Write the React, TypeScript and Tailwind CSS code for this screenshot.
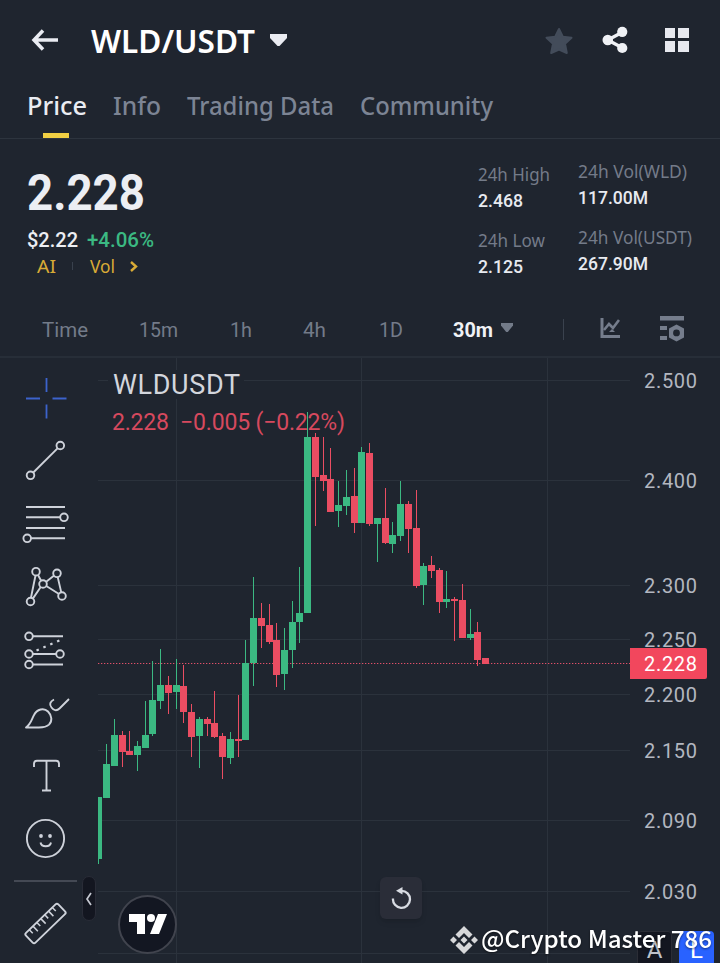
import React from "react";

type Candle = [x: number, high: number, top: number, bottom: number, low: number, up: 0 | 1];

// Candle geometry in chart pixels: centre, wick top, body top, body bottom, wick bottom, direction.
const candles: Candle[] = [
  [106.5, 744, 764, 798, 798, 1],
  [114.5, 719, 735, 766, 766, 1],
  [122.5, 731, 735, 752, 767, 0],
  [129.5, 731, 751, 755, 755, 0],
  [137.5, 741, 746, 755, 771, 1],
  [145.5, 701, 735, 748, 748, 1],
  [152.5, 661, 700, 734, 736, 1],
  [160.5, 649, 685, 701, 709, 1],
  [168.5, 676, 685, 693, 714, 0],
  [176.5, 659, 685, 692, 709, 1],
  [183.5, 665, 686, 712, 723, 0],
  [191.5, 704, 712, 737, 757, 0],
  [199.5, 717, 719, 736, 768, 1],
  [207.5, 717, 719, 724, 736, 0],
  [214.5, 691, 723, 737, 738, 0],
  [222.5, 733, 736, 757, 779, 0],
  [230.5, 732, 739, 758, 764, 1],
  [238.5, 695, 739, 741, 757, 0],
  [245.5, 640, 663, 740, 740, 1],
  [253.5, 577, 618, 663, 686, 1],
  [261.5, 603, 618, 626, 648, 0],
  [269.5, 604, 625, 642, 644, 0],
  [276.5, 623, 640, 675, 687, 0],
  [284.5, 628, 650, 674, 690, 1],
  [292.5, 601, 622, 650, 668, 1],
  [299.5, 567, 613, 622, 643, 1],
  [307.5, 412, 437, 613, 613, 1],
  [315.5, 433, 437, 477, 526, 0],
  [323.5, 437, 475, 481, 491, 0],
  [330.5, 448, 479, 512, 512, 0],
  [338.5, 481, 505, 511, 527, 1],
  [346.5, 470, 497, 506, 515, 1],
  [354.5, 468, 496, 523, 533, 0],
  [361.5, 447, 452, 523, 523, 1],
  [369.5, 443, 453, 524, 526, 0],
  [377.5, 518, 518, 524, 562, 1],
  [385.5, 488, 518, 543, 544, 0],
  [392.5, 522, 535, 544, 553, 1],
  [400.5, 481, 504, 536, 541, 1],
  [408.5, 501, 504, 529, 553, 0],
  [416.5, 490, 528, 586, 588, 0],
  [423.5, 563, 566, 585, 605, 1],
  [431.5, 556, 565, 571, 578, 0],
  [439.5, 568, 570, 602, 613, 0],
  [446.5, 571, 599, 602, 608, 1],
  [454.5, 597, 599, 601, 641, 0],
  [462.5, 584, 600, 638, 638, 0],
  [470.5, 609, 634, 638, 640, 1],
  [477.5, 622, 632, 660, 666, 0],
  [485.5, 658, 658, 664, 664, 0],
];

const levels: [number, string][] = [
  [380, "2.500"],
  [480, "2.400"],
  [585, "2.300"],
  [639, "2.250"],
  [694, "2.200"],
  [750, "2.150"],
  [820, "2.090"],
  [891, "2.030"],
  [953, ""],
];

const UP = "#3bb982";
const DOWN = "#ea4d62";

function Chart() {
  return (
    <svg className="block shrink-0" width="622" height="605" viewBox="98 358 622 605" fontFamily="Roboto, sans-serif">
      <g stroke="#2b323c" strokeWidth="1">
        {[176.5, 361.5, 547.5].map((x) => (
          <line key={x} x1={x} x2={x} y1="358" y2="963" />
        ))}
        {levels.map(([y]) => (
          <line key={y} x1="98" x2="630" y1={y + 0.5} y2={y + 0.5} />
        ))}
      </g>
      <line x1="98" x2="630" y1="663.5" y2="663.5" stroke="#e0506a" strokeWidth="1.2" strokeDasharray="1.3 1.7" />
      <text x="112" y="430" fontSize="23" fill="#d6495e" textLength="57">2.228</text>
      <text x="180" y="430" fontSize="23" fill="#d6495e" textLength="165">−0.005 (−0.22%)</text>
      <rect x="98" y="797" width="4" height="62" fill={UP} />
      <rect x="98" y="859" width="1" height="5" fill={UP} />
      {candles.map(([x, h, t, b, l, up]) => (
        <g key={x} fill={up ? UP : DOWN}>
          <rect x={x - 0.5} y={h} width="1" height={l - h} />
          <rect x={x - 3.5} y={t} width="7" height={b - t} />
        </g>
      ))}
      <rect x="108" y="370" width="136" height="29" fill="#1f252f" />
      <text x="113" y="393.5" fontSize="27" fill="#d3d6dd" textLength="127">WLDUSDT</text>
      <g fontSize="20" fill="#b3b7c0">
        {levels.map(([y, label]) => (
          <text key={y} x="644" y={y + 7.5} textLength={label ? 53 : undefined}>{label}</text>
        ))}
      </g>
      <path d="M630 648h75a2 2 0 0 1 2 2v27a2 2 0 0 1-2 2h-75z" fill="#f2475d" />
      <text x="644" y="671" fontSize="20" fill="#fff" textLength="53">2.228</text>
    </svg>
  );
}

function DrawingTools() {
  return (
    <svg className="block shrink-0" width="98" height="605" viewBox="0 358 98 605" fill="none" stroke="#ced2da" strokeWidth="1.9">
      <path d="M46.5 378v14M46.5 404.500v14M26 398.500h14M52.500 398.500h14" stroke="#3c63cc" strokeWidth="1.8" />
      <circle cx="60.300" cy="445.500" r="3.800" />
      <circle cx="30.500" cy="475.300" r="3.800" />
      <path d="m33.300 472.500 24.200-24.200" />
      <path d="M26 507h39M26 517.300h34M26 528h39M31 538.300h34" />
      <circle cx="64" cy="517.300" r="3.800" />
      <circle cx="27.200" cy="538.300" r="3.800" />
      <circle cx="36" cy="571.700" r="3.800" />
      <circle cx="57" cy="573.300" r="3.800" />
      <circle cx="43" cy="584" r="3.800" />
      <circle cx="30.500" cy="601.500" r="3.800" />
      <circle cx="62" cy="596" r="3.800" />
      <path d="m35.500 575.500-4.500 22M38 575l3 5.500M46.200 581.800l7.600-6M57.700 577.100l3.500 15M46.300 586l12.300 7.800M40.700 587l-7.700 11.400" />
      <circle cx="29" cy="636.300" r="3.800" />
      <circle cx="29" cy="654" r="3.800" />
      <circle cx="60" cy="654" r="3.800" />
      <circle cx="29" cy="664.500" r="3.800" />
      <path d="M33 636.300h30M33 654h23M33 664.500h30" />
      <path d="m36.500 650.500 25-11" strokeWidth="2.200" strokeDasharray="2.500 5" />
      <path d="M26 727.500c5-3.500 5.500-8 8-12.500 3-6 10-7.500 14-3.500 4 4 4.500 9.500 1 13.200-3 3-7 2.800-11 2.800z" strokeLinejoin="round" />
      <path d="M54 699.500c-4 2-5 5-2.500 8 2 2.800 5 4 8 1L69 699" />
      <path d="M34 767v-3c0-2 1-3.300 3-3.300h19c2 0 3 1.300 3 3.300v3M46.500 761v29M42 790.500h9" />
      <circle cx="45.500" cy="838.500" r="18.600" />
      <path d="M40.500 842.500c1 5 9.500 5 10.500 0" />
      <circle cx="41" cy="836" r="1.900" fill="#ced2da" stroke="none" />
      <circle cx="50" cy="836" r="1.900" fill="#ced2da" stroke="none" />
      <path d="M14 881h63" stroke="#444954" strokeWidth="2" />
      <g transform="translate(45.500 923.500) rotate(-44)">
        <rect x="-22.500" y="-6.800" width="45" height="13.600" rx="2" />
        <path d="M-16-6.800v5M-10.800-6.800v7M-5.500-6.800v5M0-6.800v7M5.500-6.800v5M10.800-6.800v7M16-6.800v5" strokeWidth="1.500" />
      </g>
    </svg>
  );
}

// A single line of text fitted to a fixed width.
function Fit({ children, w, size, weight = 400, font = "'Noto Sans', sans-serif" }: { children: string; w: number; size: number; weight?: number; font?: string }) {
  return (
    <svg className="block shrink-0 overflow-visible" width={w} height={size * 1.3} fill="currentColor">
      <text y={size} fontSize={size} fontWeight={weight} fontFamily={font} textLength={w} lengthAdjust="spacingAndGlyphs">{children}</text>
    </svg>
  );
}

function Stat({ label, value, w, vw }: { label: string; value: string; w: number; vw: number }) {
  return (
    <div className="h-[66px]">
      <div className="h-[26px] pt-px text-[#747b89]"><Fit w={w} size={18}>{label}</Fit></div>
      <div className="pt-[0.5px] text-[#e7eaf0]"><Fit w={vw} size={18} weight={500} font="Roboto, sans-serif">{value}</Fit></div>
    </div>
  );
}

export default function App() {
  return (
    <div className="relative flex h-[963px] w-[720px] flex-col overflow-hidden bg-[#1f252f] font-[Roboto,sans-serif]">
      <header className="flex h-20 shrink-0 items-center pl-[31px]">
        <svg className="-mt-px" width="28" height="22" viewBox="0 0 28 22" fill="none" stroke="#eaecf2" strokeWidth="3.500">
          <path d="M12 1.500 3 11l9 9.500M3 11h24" />
        </svg>
        <div className="ml-8 pt-0.5 text-white"><Fit w={164} size={31.5} weight={600}>WLD/USDT</Fit></div>
        <svg className="ml-[15px]" width="17" height="13" viewBox="0 0 17 13" fill="#eaecf2"><path d="M0 0h17v4L9.500 12h-2L0 4z" /></svg>
        <svg className="ml-[258px] mt-px" width="28" height="28" viewBox="0 0 28 28" fill="#434c5a" stroke="#434c5a" strokeWidth="2" strokeLinejoin="round"><path d="m14 2 3.800 7.800 8.700 1-6.500 6 1.800 9.200L14 22.500 6.200 26 8 16.800l-6.500-6 8.700-1z" /></svg>
        <svg className="-mt-px ml-[29px]" width="27" height="28" viewBox="0 0 28 28" fill="#eff1f5"><path d="M21 6 6 14l15 8" fill="none" stroke="#eff1f5" strokeWidth="3.500" /><circle cx="21" cy="5.500" r="5.300" /><circle cx="6" cy="14" r="5.500" /><circle cx="21" cy="22.300" r="5.300" /></svg>
        <div className="-mt-px ml-[35.5px] grid grid-cols-2 gap-[3px]">
          {[0, 1, 2, 3].map((i) => <i key={i} className="block size-[10.500px] bg-[#e7e9ef]" />)}
        </div>
      </header>

      <nav className="flex h-[59px] shrink-0 border-b border-[#2d343e] pl-[27px] pt-2.5 text-[#7c8494]">
        <div className="relative text-[#eaecf2]">
          <Fit w={60} size={24.5} weight={500}>Price</Fit>
          <i className="absolute left-4 top-[43px] h-[5px] w-[26px] bg-[#f1cf43]" />
        </div>
        <div className="ml-[26px]"><Fit w={48} size={24.5} weight={500}>Info</Fit></div>
        <div className="ml-[26px]"><Fit w={147} size={24.5} weight={500}>Trading Data</Fit></div>
        <div className="ml-[26px]"><Fit w={133} size={24.5} weight={500}>Community</Fit></div>
      </nav>

      <section className="flex h-[163px] shrink-0 pl-[27px]">
        <div className="w-[451px]">
          <div className="h-[86px] pt-[21px] text-[#eceef3]"><Fit w={118} size={50} weight={700} font="Roboto, sans-serif">2.228</Fit></div>
          <div className="flex h-[30px] gap-[9px] pt-px">
            <span className="text-[#eceef3]"><Fit w={51} size={21} weight={500} font="Roboto, sans-serif">$2.22</Fit></span>
            <span className="text-[#3bb982]"><Fit w={67} size={21} weight={500} font="Roboto, sans-serif">+4.06%</Fit></span>
          </div>
          <div className="-mt-px flex h-6 items-center pl-[10px] text-[#d9ab36]">
            <Fit w={19} size={18.5}>AI</Fit>
            <i className="ml-[16px] h-2 w-px bg-[#39414d]" />
            <div className="ml-[17px]"><Fit w={25} size={18.5}>Vol</Fit></div>
            <svg className="mt-px ml-[15px]" width="8" height="11" viewBox="0 0 8 11" fill="none" stroke="#d9ab36" strokeWidth="2.400"><path d="m1 1 5 4.500L1 10" /></svg>
          </div>
        </div>
        <div className="w-[100px] pt-[23px]">
          <Stat label="24h High" value="2.468" w={72} vw={45} />
          <Stat label="24h Low" value="2.125" w={67} vw={45} />
        </div>
        <div className="pt-5">
          <Stat label="24h Vol(WLD)" value="117.00M" w={109} vw={70} />
          <Stat label="24h Vol(USDT)" value="267.90M" w={114} vw={70} />
        </div>
      </section>

      <div className="flex h-14 shrink-0 items-center border-b-2 border-[#272e38] pl-[42px] text-[20px] text-[#737b89]">
        <div className="flex pt-px">
          <Fit w={46} size={20.5} font="Roboto, sans-serif">Time</Fit>
          <div className="ml-[51px]"><Fit w={39} size={20.5} font="Roboto, sans-serif">15m</Fit></div>
          <div className="ml-[52px]"><Fit w={22} size={20.5} font="Roboto, sans-serif">1h</Fit></div>
          <div className="ml-[51px]"><Fit w={23} size={20.5} font="Roboto, sans-serif">4h</Fit></div>
          <div className="ml-[53px]"><Fit w={24} size={20.5} font="Roboto, sans-serif">1D</Fit></div>
          <div className="ml-[50px] text-[#f0f2f6]"><Fit w={40} size={20.5} weight={700} font="Roboto, sans-serif">30m</Fit></div>
        </div>
        <svg className="-mt-1 ml-2" width="12" height="9" viewBox="0 0 12 9" fill="#737b89"><path d="M0 0h12v2.500L6.800 9H5.200L0 2.500z" /></svg>
        <i className="ml-[50px] h-[21px] w-px bg-[#3a424e]" />
        <svg className="-mt-0.5 ml-9" width="20" height="20" viewBox="0 0 20 20" fill="none" stroke="#757d8c" strokeWidth="3"><path d="M2 0v18.500h18" /><path d="m4 12 5-6 4 4 6-8" strokeWidth="2.600" /><path d="m9 14 3-3 3 3z" fill="#757d8c" stroke="none" /></svg>
        <svg className="ml-[39px]" width="26" height="26" viewBox="0 0 26 26" fill="#757d8c"><path d="M1 0h24v4.500H1zM1 10h7v4H1zM1 20h7v4H1z" /><path fillRule="evenodd" d="m17.500 8.500 7.500 4v9l-7.500 4-7.500-4v-9zm0 5a3.400 3.400 0 1 0 0 6.800 3.400 3.400 0 0 0 0-6.800z" /></svg>
      </div>

      <main className="relative flex h-[605px] shrink-0">
        <DrawingTools />
        <Chart />
        <button className="absolute left-[82px] top-[518px] flex h-[45px] w-[14px] items-center justify-center rounded-full border border-[#292c37] bg-[#131620]">
          <svg className="-ml-0.5" width="7" height="14" viewBox="0 0 7 14" fill="none" stroke="#c5c8d1" strokeWidth="1.700"><path d="M6 1 2 7l4 6" /></svg>
        </button>
        <div className="absolute left-[118px] top-[536.5px] flex size-[59px] items-center justify-center rounded-full border-2 border-[#41444e] bg-[#131722]">
          <svg width="38" height="20" viewBox="0 0 38 20" fill="#fff"><path d="M0 0h16v20H8V8H0zM29 0h9l-8 20h-9z" /><circle cx="22" cy="4" r="4" /></svg>
        </div>
        <button className="absolute left-[380px] top-[519px] flex size-[42px] items-center justify-center rounded-md bg-[#2a2d38] shadow-md">
          <svg width="21" height="22" viewBox="0 0 21 22" fill="none" stroke="#d8dbe2" strokeWidth="2.300"><path d="M2 11.500a8.500 8.500 0 1 0 8.500-7.700H8" /><path d="M5 3.800 11.500 0v7.500z" fill="#d8dbe2" stroke="none" /></svg>
        </button>
        <div className="absolute left-[637px] top-[573px] flex h-[45px] w-[35px] justify-center rounded border border-[#2b2d36] bg-[#131620] pt-[3px] text-[24px] leading-[30px] text-[#bfc2ca]">A</div>
        <div className="absolute left-[679px] top-[573px] flex h-[45px] w-[35px] justify-center rounded bg-[#2962ff] pt-1 text-[24px] leading-[30px] text-white">L</div>
        <div className="absolute left-[450px] top-[566px] flex items-center text-white">
          <svg width="28" height="30" viewBox="0 0 28 30" fill="#d7d8da"><path d="m14 1 8.500 8.500-3.500 3.500-5-5-5 5-3.500-3.500zM5.500 20.500 9 17l5 5 5-5 3.500 3.500L14 29zM3.500 11.500 7 15l-3.500 3.500L0 15zM24.500 11.500 28 15l-3.500 3.500L21 15zM14 11.500l3.500 3.500-3.500 3.500-3.500-3.500z" /></svg>
          <div className="ml-[3px] drop-shadow-[0_1px_1px_rgba(0,0,0,.5)]"><Fit w={231} size={24} weight={500} font="'Noto Sans CJK SC', sans-serif">@Crypto Master 786</Fit></div>
        </div>
      </main>
    </div>
  );
}
